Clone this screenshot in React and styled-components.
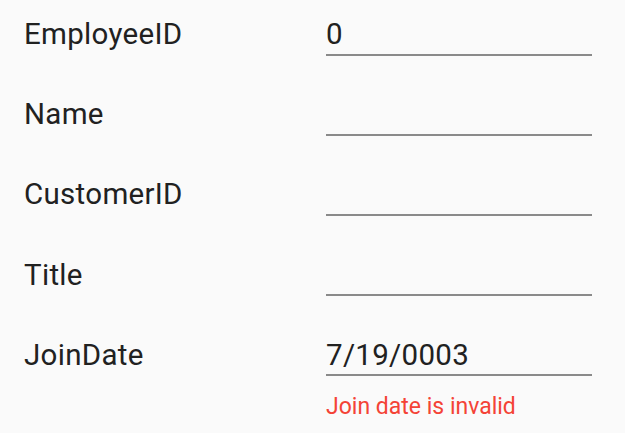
import React from 'react'
import styled, { createGlobalStyle } from 'styled-components'

const GlobalStyle = createGlobalStyle`
  html, body {
    margin: 0;
    padding: 0;
    background: #fafafa;
  }
  body {
    font-family: Roboto, "Noto Sans", sans-serif;
    color: #212121;
  }
`;

const Form = styled.div`
  display: flex;
  flex-direction: column;
  padding: 0 33px 0 24px;
`;

const Row = styled.div`
  display: grid;
  grid-template-columns: 302px 1fr;
  min-height: 80.2px;
`;

const Label = styled.div`
  font-size: 29.5px;
  letter-spacing: 0.3px;
  line-height: 34px;
  padding-top: 17px;
`;

const Field = styled.div`
  display: flex;
  flex-direction: column;
`;

const Input = styled.div`
  font-size: 29.5px;
  letter-spacing: 0.3px;
  line-height: 34px;
  height: 34px;
  padding: 17px 0 2.5px 0;
  border-bottom: 2px solid #8a8a8a;
`;

const Error = styled.div`
  color: #f44336;
  font-size: 23px;
  line-height: 27px;
  padding-top: 16.5px;
`;

const fields = [
  { label: 'EmployeeID', value: '0' },
  { label: 'Name', value: '' },
  { label: 'CustomerID', value: '' },
  { label: 'Title', value: '' },
  { label: 'JoinDate', value: '7/19/0003', error: 'Join date is invalid' },
];

const App = () => {
  return (
    <>
      <GlobalStyle />
      <Form>
        {fields.map(f => (
          <Row key={f.label}>
            <Label>{f.label}</Label>
            <Field>
              <Input>{f.value}</Input>
              {f.error && <Error>{f.error}</Error>}
            </Field>
          </Row>
        ))}
      </Form>
    </>
  )
}

export default App
